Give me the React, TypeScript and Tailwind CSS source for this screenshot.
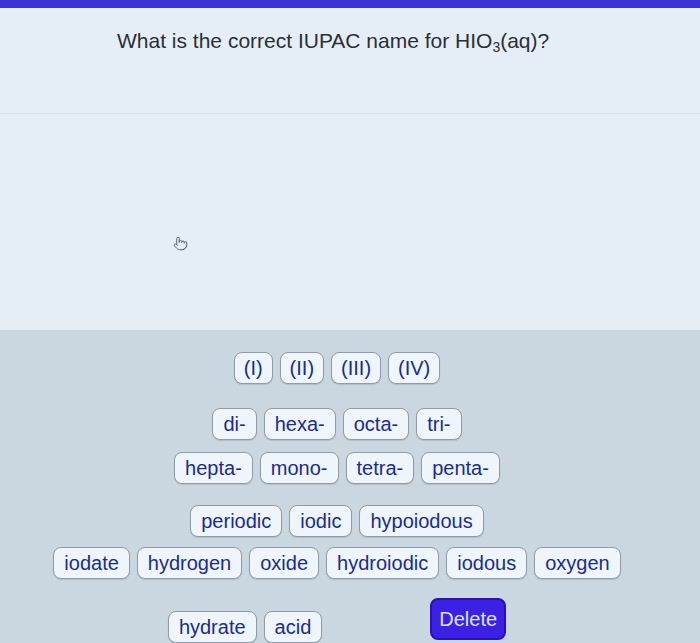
import { Pointer } from 'lucide-react'

const ROMAN = ['(I)', '(II)', '(III)', '(IV)']
const PREFIX_A = ['di-', 'hexa-', 'octa-', 'tri-']
const PREFIX_B = ['hepta-', 'mono-', 'tetra-', 'penta-']
const WORDS_A = ['periodic', 'iodic', 'hypoiodous']
const WORDS_B = ['iodate', 'hydrogen', 'oxide', 'hydroiodic', 'iodous', 'oxygen']

function Chip({ label, tight = false }: { label: string; tight?: boolean }) {
  return (
    <button
      className={`h-[32px] rounded-[8px] border-[1.5px] border-[#8f9ca8] bg-[#eef5fb] text-[20px] leading-none text-[#1c2b94] shadow-[0_1px_1px_rgba(0,0,0,0.12)] ${
        tight ? 'px-[9px]' : 'px-[10px]'
      }`}
    >
      {label}
    </button>
  )
}

function Row({ items, className = '', tight = false }: { items: string[]; className?: string; tight?: boolean }) {
  return (
    <div className={`flex justify-center gap-[7px] ${className}`}>
      {items.map((w) => (
        <Chip key={w} label={w} tight={tight} />
      ))}
    </div>
  )
}

export default function App() {
  return (
    <div className="flex h-[643px] w-[700px] flex-col overflow-hidden bg-[#e5eef6] font-['Liberation_Sans',Arial,sans-serif]">
      <div className="h-[8px] shrink-0 bg-[#3b32d6]" />

      <div className="relative h-[322px] shrink-0">
        <div className="pl-[117px] pt-[21px] text-[21px] leading-[24px] text-[#2a2e38]">
          What is the correct IUPAC name for HIO<sub className="text-[14px]">3</sub>(aq)?
        </div>
        <div className="mt-[60px] h-px bg-[#d4dde5]" />
        <Pointer className="absolute left-[173px] top-[228px] h-[15px] w-[15px] text-[#5c6570]" strokeWidth={1.6} />
      </div>

      <div className="flex flex-1 flex-col bg-[#cad7e1] pr-[26px] pt-[22px]">
        <Row items={ROMAN} tight />
        <Row items={PREFIX_A} className="mt-[24px]" />
        <Row items={PREFIX_B} className="mt-[12px]" />
        <Row items={WORDS_A} className="mt-[21px]" />
        <Row items={WORDS_B} className="mt-[10px]" />
        <div className="mt-[19px] flex items-end justify-center gap-[7px]">
          <div className="mb-[-3px] flex gap-[7px]">
            <Chip label="hydrate" />
            <Chip label="acid" />
          </div>
          <button className="ml-[101px] h-[42px] rounded-[8px] border-2 border-[#2a10b8] bg-[#3c20e4] px-[7px] text-[20px] leading-none text-[#dfe6ff]">
            Delete
          </button>
        </div>
      </div>
    </div>
  )
}
